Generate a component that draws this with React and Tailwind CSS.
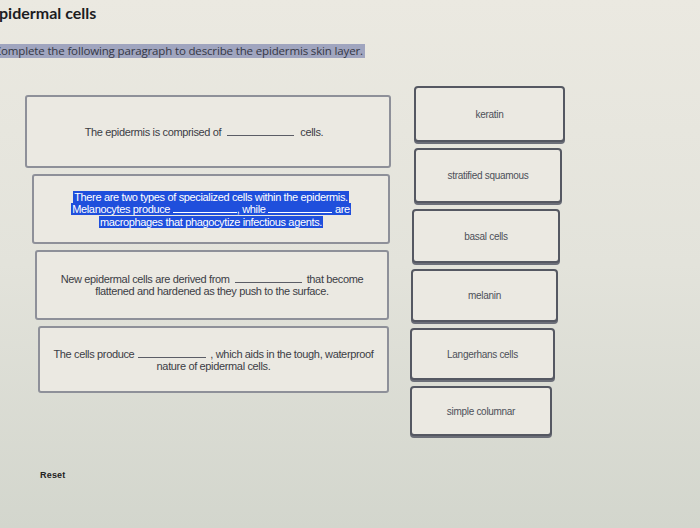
const answers = [
  { label: 'keratin', ml: 'ml-[2px]', w: 'w-[151px]', h: 'h-[56px]' },
  { label: 'stratified squamous', ml: 'ml-[2px]', w: 'w-[148px]', h: 'h-[55px]' },
  { label: 'basal cells', ml: 'ml-0', w: 'w-[148px]', h: 'h-[54px]' },
  { label: 'melanin', ml: 'ml-[-1px]', w: 'w-[147px]', h: 'h-[53px]' },
  { label: 'Langerhans cells', ml: 'ml-[-2px]', w: 'w-[145px]', h: 'h-[52px]' },
  { label: 'simple columnar', ml: 'ml-[-2px]', w: 'w-[142px]', h: 'h-[50px]' },
];

function Blank({ w = 'w-[67px]', light }) {
  return (
    <span
      className={`inline-block ${w} h-[9px] align-baseline border-b ${
        light ? 'border-white' : 'border-[#5b5d66]'
      }`}
    />
  );
}

function Sentence({ children, className = '' }) {
  return (
    <div
      className={`flex flex-col items-center justify-center rounded-[3px] border-2 border-[#8e9099] bg-[#ebe9e2] text-[11px] leading-[12px] tracking-[-0.35px] text-[#3b3d45] ${className}`}
    >
      {children}
    </div>
  );
}

function Highlight({ children }) {
  return <span className="bg-[#1f4fdc] text-white px-[1px]">{children}</span>;
}

export default function App() {
  return (
    <div
      className="w-[700px] h-[528px] overflow-hidden bg-gradient-to-b from-[#ebe9e1] via-[#e3e3db] to-[#d3d6cd]"
      style={{ fontFamily: '"Liberation Sans", Arial, sans-serif' }}
    >
      <h1
        className="ml-[-1px] pt-[3px] text-[16px] leading-[20px] font-bold text-[#1c1c1f]"
        style={{ fontFamily: 'Lato, "Open Sans", sans-serif' }}
      >
        pidermal cells
      </h1>

      <div className="mt-[21px] ml-[-6px] flex">
        <span
          className="bg-[#a0a5bf] text-[11.5px] leading-[14px] tracking-[-0.15px] text-[#343744] pr-[2px]"
          style={{ fontFamily: '"Open Sans", sans-serif' }}
        >
          Complete the following paragraph to describe the epidermis skin layer.
        </span>
      </div>

      <div className="flex mt-[8px]">
        {/* sentence column */}
        <div className="flex flex-col gap-[6px] pt-[29px] w-[412px]">
          <Sentence className="ml-[25px] w-[366px] h-[73px]">
            <div className="flex items-baseline gap-[6px] pr-[8px]">
              <span>The epidermis is comprised of</span>
              <Blank />
              <span>cells.</span>
            </div>
          </Sentence>

          <Sentence className="ml-[32px] w-[358px] h-[70px]">
            <div>
              <Highlight>There are two types of specialized cells within the epidermis.</Highlight>
            </div>
            <div>
              <Highlight>
                Melanocytes produce <Blank w="w-[64px]" light />, while <Blank w="w-[64px]" light /> are
              </Highlight>
            </div>
            <div className="mt-[1px]">
              <Highlight>macrophages that phagocytize infectious agents.</Highlight>
            </div>
          </Sentence>

          <Sentence className="ml-[35px] w-[354px] h-[70px]">
            <div className="flex items-baseline gap-[5px]">
              <span>New epidermal cells are derived from</span>
              <Blank />
              <span>that become</span>
            </div>
            <div>flattened and hardened as they push to the surface.</div>
          </Sentence>

          <Sentence className="ml-[38px] w-[351px] h-[67px]">
            <div className="flex items-baseline gap-[4px]">
              <span>The cells produce</span>
              <Blank w="w-[68px]" />
              <span>, which aids in the tough, waterproof</span>
            </div>
            <div>nature of epidermal cells.</div>
          </Sentence>

          <button className="ml-[40px] mt-[70px] self-start text-[9px] font-bold text-[#222] tracking-[0.2px]">
            Reset
          </button>
        </div>

        {/* answer bank */}
        <div className="flex flex-col gap-[6px] pt-[20px]">
          {answers.map((a) => (
            <div
              key={a.label}
              className={`${a.ml} ${a.w} ${a.h} flex items-center justify-center rounded-[4px] border-2 border-[#555862] bg-[#ebe9e2] shadow-[0_2px_0_#6b6e78] text-[10px] tracking-[-0.3px] text-[#4d5059]`}
            >
              {a.label}
            </div>
          ))}
        </div>
      </div>
    </div>
  );
}
